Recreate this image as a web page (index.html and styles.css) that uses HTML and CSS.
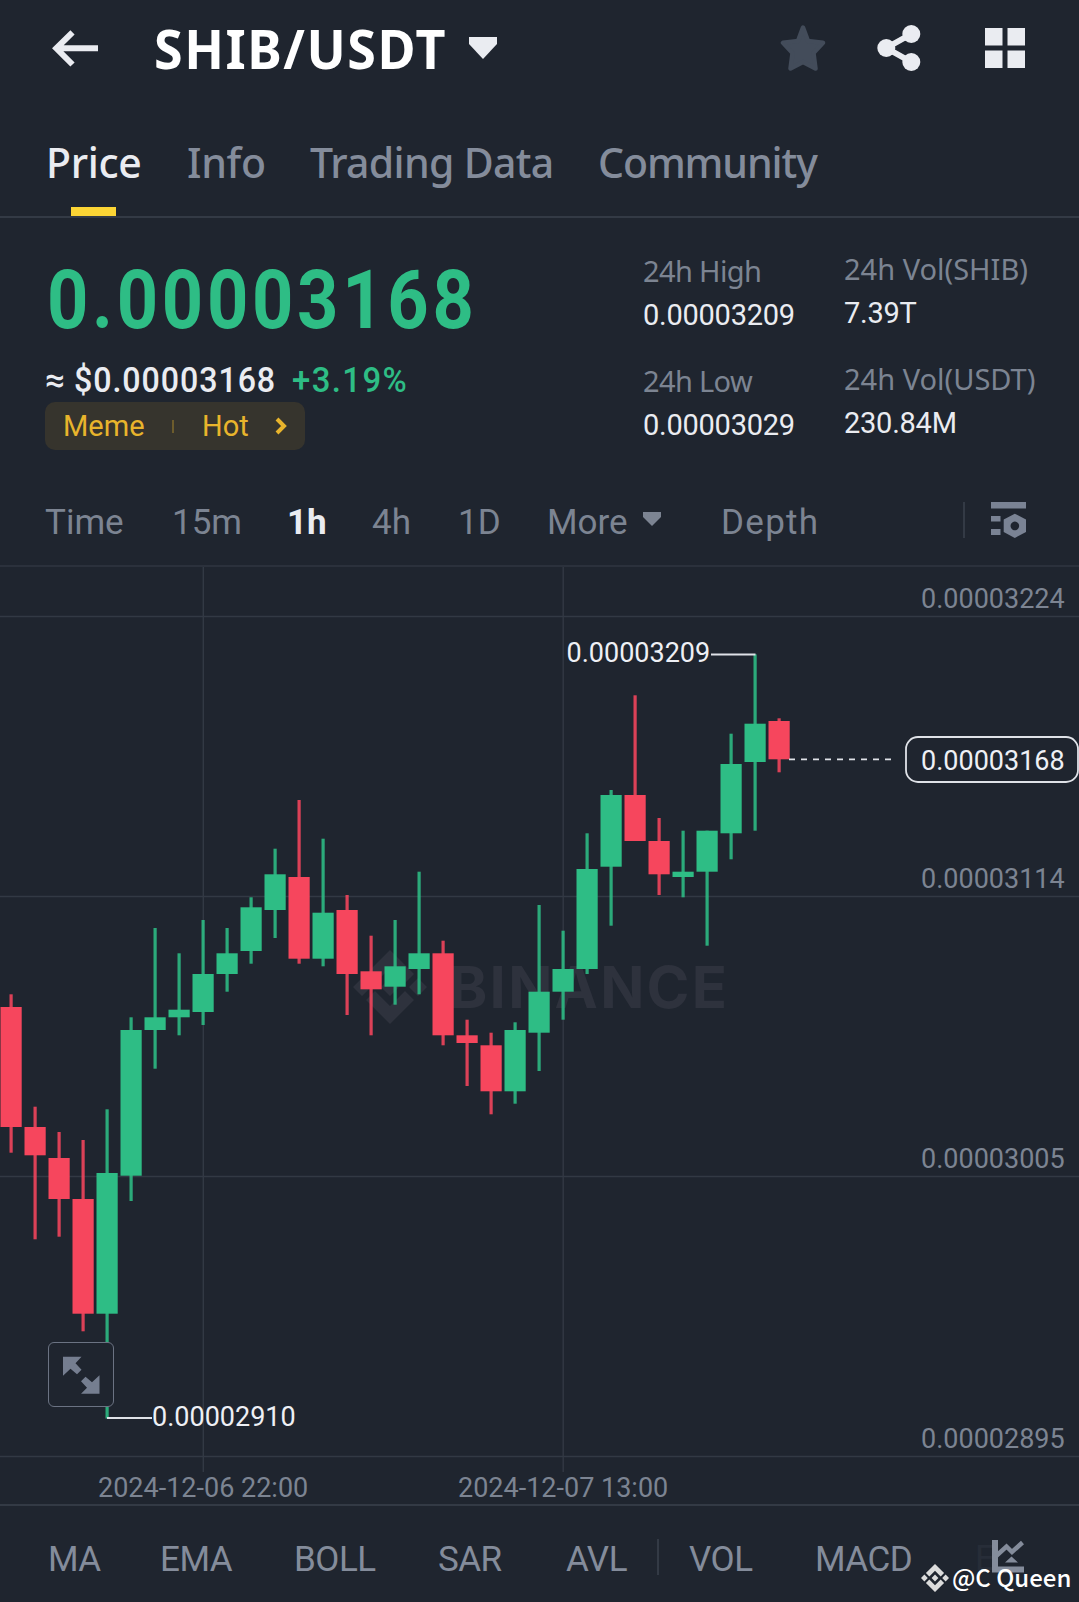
FILE: index.html
```html
<!DOCTYPE html>
<html lang="en">
<head>
  <meta charset="UTF-8">
  <meta name="viewport" content="width=device-width, initial-scale=1.0">
  <title>SHIB/USDT</title>
  <link rel="stylesheet" href="styles.css">
</head>
<body>
  <header class="header">
    <svg class="back" width="46" height="38" viewBox="52 29 46 38">
      <path d="M72.5 32.3 56.3 48.3 72.5 64.5M56 48.3H98" fill="none" stroke="currentColor" stroke-width="6"/>
    </svg>
    <h1 class="pair">SHIB/USDT</h1>
    <svg class="caret" width="28" height="22" viewBox="0 0 28 22"><path d="M0 0H28V7L14 22 0 7Z" fill="currentColor"/></svg>
    <div class="actions">
      <svg class="star" width="46" height="48" viewBox="780 25 46 48">
        <path d="M803 28.5 808 42 823 43.8 813.5 54 815.5 69.5 803 63 790.5 69.5 792.5 54 783 43.8 798 42Z" fill="currentColor" stroke="currentColor" stroke-width="4.5" stroke-linejoin="round"/>
      </svg>
      <svg class="share" width="44" height="48" viewBox="877 24 44 48">
        <path d="M911.3 34 886.3 48 911.3 62" fill="none" stroke="currentColor" stroke-width="6"/>
        <circle cx="886.3" cy="48" r="9"/><circle cx="911.3" cy="34" r="9"/><circle cx="911.3" cy="62" r="9"/>
      </svg>
      <svg class="grid-icon" width="40" height="40" viewBox="0 0 40 40">
        <path d="M0 0H17.5V17.5H0ZM22.5 0H40V17.5H22.5ZM0 22.5H17.5V40H0ZM22.5 22.5H40V40H22.5Z"/>
      </svg>
    </div>
  </header>

  <nav class="tabs">
    <a class="tab active">Price</a>
    <a class="tab info">Info</a>
    <a class="tab trading">Trading Data</a>
    <a class="tab community">Community</a>
  </nav>

  <section class="summary">
    <div class="price-col">
      <div class="last-price">0.00003168</div>
      <div class="fiat">
        <span class="approx">≈</span>
        <span class="usd">$0.00003168</span>
        <span class="change">+3.19%</span>
      </div>
      <div class="tags">
        <span class="tag-meme">Meme</span>
        <i class="tag-sep"></i>
        <span>Hot</span>
        <svg class="tag-arrow" width="12" height="18" viewBox="0 0 12 18"><path d="M2 2 9 9 2 16" fill="none" stroke="currentColor" stroke-width="4"/></svg>
      </div>
    </div>
    <dl class="stats">
      <dt>24h High</dt><dd>0.00003209</dd>
      <dt>24h Low</dt><dd>0.00003029</dd>
    </dl>
    <dl class="stats volume">
      <dt>24h Vol(SHIB)</dt><dd>7.39T</dd>
      <dt>24h Vol(USDT)</dt><dd>230.84M</dd>
    </dl>
  </section>

  <nav class="intervals">
    <a>Time</a>
    <a>15m</a>
    <a class="active">1h</a>
    <a>4h</a>
    <a>1D</a>
    <a class="more">More <svg width="18" height="14" viewBox="0 0 18 14"><path d="M0 0H18V5L9 14 0 5Z" fill="currentColor"/></svg></a>
    <a class="depth">Depth</a>
    <i class="divider"></i>
    <svg class="settings" width="36" height="36" viewBox="991 502 36 36">
      <path d="M991 502H1026V508.5H991ZM991 516H1000.5V521.5H991ZM991 529H1000.5V535H991Z"/>
      <path fill-rule="evenodd" d="M1014.8 513.7 1026 519.5V532L1014.8 538 1003.7 532V519.5ZM1014.8 521.6a4.3 4.3 0 1 0 .1 0Z"/>
    </svg>
  </nav>

  <main class="chart">
    <svg id="chart" width="1079" height="937" viewBox="0 567 1079 937">
      <g class="grid-lines">
        <path d="M0 616.5H1079M0 896.5H1079M0 1176.5H1079M0 1456.5H1079M203.3 567V1472M563.2 567V1472"/>
      </g>
      <g class="brand">
        <path d="M390 950 414 974 405 983 390 968 375 983 366 974ZM390 1024 366 1000 375 991 390 1006 405 991 414 1000ZM362 978 371 987 362 996 353 987ZM418 978 427 987 418 996 409 987ZM390 978 399 987 390 996 381 987Z"/>
        <text x="449" y="1008" textLength="278">BINANCE</text>
      </g>
      <g id="candles"></g>
      <g class="axis-labels">
        <text x="921" y="607.5">0.00003224</text>
        <text x="921" y="887.5">0.00003114</text>
        <text x="921" y="1167.5">0.00003005</text>
        <text x="921" y="1447.5">0.00002895</text>
        <text x="98" y="1497">2024-12-06 22:00</text>
        <text x="458" y="1497">2024-12-07 13:00</text>
      </g>
      <g class="markers">
        <path d="M711 654.5H755.5M107 1418H152"/>
        <path class="dashed" d="M789 759.3H894"/>
        <rect x="906" y="737" width="172" height="45" rx="12"/>
        <text x="566.5" y="661.5">0.00003209</text>
        <text x="152" y="1425.5">0.00002910</text>
        <text x="921" y="770">0.00003168</text>
      </g>
    </svg>
    <button class="expand" aria-label="Full screen">
      <svg width="37" height="38" viewBox="63 1355.5 37 37.5">
        <path d="M63 1356H81.5L75.5 1362.5 81.5 1369 77 1373.5 70.5 1368 63 1375ZM99.5 1393H81L87 1387 81 1380.5 85.5 1376 92 1381.5 99.5 1374.5Z" fill="currentColor"/>
      </svg>
    </button>
  </main>

  <footer class="indicators">
    <a>MA</a>
    <a>EMA</a>
    <a>BOLL</a>
    <a>SAR</a>
    <a>AVL</a>
    <i class="divider"></i>
    <a>VOL</a>
    <a>MACD</a>
    <a class="faded">E</a>
    <svg class="chart-icon" width="32" height="33" viewBox="992 1540 32 33">
      <path d="M992 1540H998V1566.5H1024V1572.5H992ZM1005 1562.5 1011.5 1556.5 1018 1562.5Z" fill="currentColor"/>
      <path d="M995 1557 1006.5 1546.5 1012 1552 1022.5 1542.5" fill="none" stroke="currentColor" stroke-width="4.5"/>
    </svg>
  </footer>

  <div class="credit">
    <svg width="28" height="28" viewBox="353 950 74 74">
      <path d="M390 950 414 974 405 983 390 968 375 983 366 974ZM390 1024 366 1000 375 991 390 1006 405 991 414 1000ZM362 978 371 987 362 996 353 987ZM418 978 427 987 418 996 409 987ZM390 978 399 987 390 996 381 987Z" fill="currentColor"/>
    </svg>
    <span>@C Queen</span>
  </div>

  <script src="chart.js"></script>
</body>
</html>
```

FILE: styles.css
```css
* {
  box-sizing: border-box;
}
body {
  margin: 0;
  width: 1079px;
  height: 1602px;
  overflow: hidden;
  position: relative;
  background: #1f252f;
  color: #eaecf1;
  font-family: Roboto, "Noto Sans", sans-serif;
}

/* header */
.header {
  display: flex;
  align-items: center;
  height: 96px;
  padding: 0 54px 0 52px;
}
.pair {
  margin: 2px 0 0 56px;
  width: 315px;
  font: 700 53px/96px "Noto Sans", sans-serif;
  letter-spacing: 1.6px;
  color: #fff;
  white-space: nowrap;
  transform: scaleX(0.98);
  transform-origin: left;
}
.actions {
  display: flex;
  align-items: center;
  margin-left: auto;
  fill: currentColor;
}
.star {
  color: #434c5a;
}
.share {
  margin-left: 51px;
}
.grid-icon {
  margin-left: 64px;
}

/* tabs */
.tabs {
  display: grid;
  grid-template-columns: 141px 123px 288px auto;
  height: 122px;
  padding: 31px 0 0 46px;
  border-bottom: 2px solid #333a45;
  font: 500 41px/70px "Noto Sans", sans-serif;
  color: #848c9b;
}
.tab {
  letter-spacing: -0.3px;
  white-space: nowrap;
}
.tab.active {
  color: #eaecf1;
}
.tab.active::after {
  content: "";
  display: block;
  width: 45px;
  height: 9px;
  margin: 10px 0 0 25px;
  background: #fcd535;
}
.tab.trading {
  letter-spacing: -0.7px;
}
.tab.community {
  letter-spacing: -1.1px;
}

/* price summary */
.summary {
  display: flex;
  height: 261px;
}
.price-col {
  width: 643px;
  padding: 37px 0 0 45px;
}
.last-price {
  margin-left: 2px;
  font-size: 82px;
  line-height: 90px;
  font-weight: 700;
  letter-spacing: 4.2px;
  color: #2ebd85;
  transform: scaleX(0.88);
  transform-origin: left;
}
.fiat {
  display: flex;
  margin-top: 16px;
  font-size: 35px;
  line-height: 40px;
  font-weight: 500;
}
.approx {
  width: 29px;
}
.usd {
  width: 218px;
  letter-spacing: 1px;
  transform: scaleX(0.92);
  transform-origin: left;
}
.change {
  letter-spacing: 1.5px;
  color: #2ebd85;
  transform: scaleX(0.94);
  transform-origin: left;
}
.tags {
  display: flex;
  align-items: center;
  width: 260px;
  height: 48px;
  margin-top: 1px;
  padding-left: 18px;
  border-radius: 10px;
  background: #36342d;
  color: #e8b42c;
  font-size: 29px;
}
.tag-meme {
  width: 109px;
}
.tag-sep {
  width: 2px;
  height: 13px;
  margin-right: 28px;
  background: #6d5c2c;
}
.tag-arrow {
  margin-left: 26px;
}
.stats {
  width: 200px;
  margin: 0;
  padding-top: 31px;
  font-size: 29px;
  line-height: 44px;
}
.stats dt {
  font-family: "Noto Sans", sans-serif;
  color: #7c8492;
  letter-spacing: -0.65px;
  white-space: nowrap;
}
.stats dd {
  margin: 0 0 22px;
  letter-spacing: -0.25px;
}
.stats.volume {
  padding-top: 29px;
  margin-left: 1px;
}
.stats.volume dt {
  letter-spacing: 0;
}

/* intervals */
.intervals {
  display: grid;
  grid-template-columns: 127px 115px 85px 86px 89px 174px 242px 28px auto;
  align-items: center;
  height: 88px;
  padding-left: 45px;
  border-bottom: 2px solid #2b313c;
  font-size: 35px;
  color: #7c8492;
}
.intervals .active {
  font-weight: 700;
  color: #eaecf1;
}
.more svg {
  margin: 0 0 8px 7px;
}
.depth {
  letter-spacing: 1.3px;
}
.divider {
  width: 2px;
  height: 36px;
  margin-top: -5px;
  background: #333a45;
}
.settings {
  margin-top: -4px;
  fill: #7a8394;
}

/* chart */
.chart {
  position: relative;
  height: 937px;
}
.chart svg {
  display: block;
}
.chart text {
  font-size: 27px;
}
.grid-lines path {
  stroke: #323944;
  stroke-width: 1.4;
}
.brand {
  fill: #2e323d;
}
.chart .brand text {
  font: 700 58px Inter, sans-serif;
}
.up {
  fill: #2ebd85;
}
.down {
  fill: #f6465d;
}
.axis-labels {
  fill: #7c8492;
}
.markers {
  fill: #eef0f5;
}
.markers path,
.markers rect {
  fill: none;
  stroke: #dfe2e8;
  stroke-width: 1.8;
}
.markers .dashed {
  stroke-dasharray: 6 6;
}
.expand {
  position: absolute;
  left: 48px;
  top: 775px;
  width: 66px;
  height: 65px;
  display: flex;
  align-items: center;
  justify-content: center;
  padding: 0;
  border: 1.5px solid #6b7383;
  border-radius: 6px;
  background: #1f252f;
  color: #757e90;
}

/* indicators */
.indicators {
  display: grid;
  grid-template-columns: 112px 134px 144px 128px 91px 32px 126px 160px 17px auto;
  align-items: center;
  height: 98px;
  padding: 10px 0 0 48px;
  border-top: 2px solid #333a45;
  font-size: 35px;
  letter-spacing: -0.5px;
  color: #848c9b;
}
.faded {
  line-height: 24px;
  color: #272d38;
}
.chart-icon {
  margin-top: -6px;
}

.credit {
  position: absolute;
  left: 921px;
  top: 1561px;
  display: flex;
  align-items: center;
  gap: 3px;
  height: 32px;
  font: 500 24px/30px "Noto Sans CJK SC", sans-serif;
  color: #fff;
  white-space: nowrap;
}
.credit svg {
  margin-top: 2px;
  color: #dcdcdc;
}
```

FILE: chart.js
```
// [top of wick, top of body, bottom of body, bottom of wick, direction]
const candles = [
  [994.3, 1007, 1127, 1152.7, 'down'],
  [1106.7, 1127, 1155.3, 1239.3, 'down'],
  [1132, 1158, 1199, 1236.7, 'down'],
  [1140, 1199, 1313.7, 1331.3, 'down'],
  [1109.3, 1173, 1313.7, 1418.5, 'up'],
  [1017.3, 1030, 1175.7, 1201, 'up'],
  [928, 1017.3, 1030, 1068.7, 'up'],
  [953.3, 1009.7, 1017.3, 1035.3, 'up'],
  [920, 974, 1012, 1025, 'up'],
  [928, 953.3, 974, 991.7, 'up'],
  [897.3, 907.3, 951, 963.7, 'up'],
  [848.7, 874.3, 910, 938, 'up'],
  [800, 877, 958.7, 963.7, 'down'],
  [838.7, 912.7, 958.7, 966.3, 'up'],
  [895, 910, 974, 1015, 'down'],
  [935.7, 971.3, 989.3, 1035.3, 'down'],
  [920, 966.3, 986.7, 1004.7, 'up'],
  [871.7, 953.3, 969, 994.3, 'up'],
  [940.7, 953.3, 1035.3, 1045.3, 'down'],
  [1019.7, 1035.3, 1043, 1086, 'down'],
  [1032.7, 1045.3, 1091.3, 1114.3, 'down'],
  [1022.3, 1030, 1091.3, 1103.7, 'up'],
  [905, 991.7, 1032.7, 1071, 'up'],
  [930.7, 969, 991.7, 1019.7, 'up'],
  [833.3, 869, 969, 974, 'up'],
  [790, 795, 866.7, 925.7, 'up'],
  [695.3, 795, 841, 841, 'down'],
  [818, 841, 874.3, 895, 'down'],
  [830.7, 871.7, 877, 897.3, 'up'],
  [830.7, 830.7, 871.7, 945.7, 'up'],
  [733.7, 764, 833.3, 859.3, 'up'],
  [654.3, 723.7, 762, 830.7, 'up'],
  [718.3, 721, 759.3, 772.3, 'down']
];

const step = 24;
const first = 11.1;
let shapes = '';

candles.forEach(([high, top, bottom, low, dir], i) => {
  const x = first + i * step;
  shapes += `<g class="${dir}">
    <rect x="${x - 1.6}" y="${high}" width="3.2" height="${low - high}" opacity="0.88"/>
    <rect x="${x - 10.6}" y="${top}" width="21.2" height="${bottom - top}"/>
  </g>`;
});

document.getElementById('candles').innerHTML = shapes;
```
